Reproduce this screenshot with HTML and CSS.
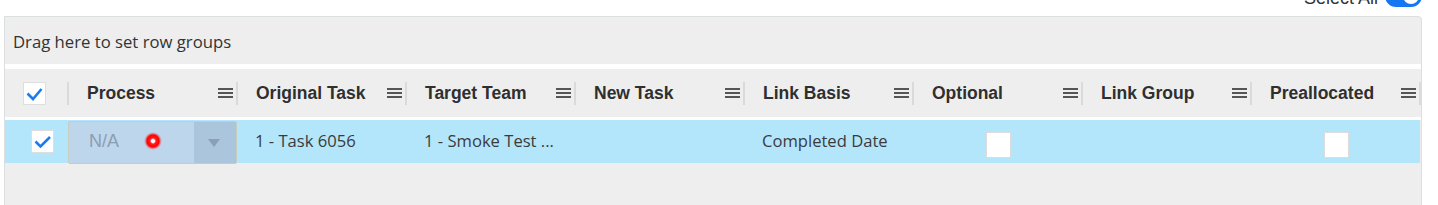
FILE: index.html
```html
<!DOCTYPE html>
<html>
<head>
<meta charset="utf-8">
<link rel="stylesheet" href="styles.css">
</head>
<body>
<div class="topbar">
  <span class="sel-label">Select All</span>
  <span class="toggle"><span class="knob"></span></span>
</div>
<div class="grid">
  <div class="group-panel">Drag here to set row groups</div>
  <div class="header">
    <div class="hcell hcell-check">
      <span class="cb"><svg viewBox="0 0 23 23" width="23" height="23"><path d="M4.5 11.5 L10 17 L18.5 7" fill="none" stroke="#1a7cf0" stroke-width="2.6"/></svg></span>
      <span class="sep"></span>
    </div>
    <div class="hcell"><span class="hlabel">Process</span><span class="menu"><i></i><i></i><i></i></span><span class="sep"></span></div>
    <div class="hcell"><span class="hlabel">Original Task</span><span class="menu"><i></i><i></i><i></i></span><span class="sep"></span></div>
    <div class="hcell"><span class="hlabel">Target Team</span><span class="menu"><i></i><i></i><i></i></span><span class="sep"></span></div>
    <div class="hcell"><span class="hlabel">New Task</span><span class="menu"><i></i><i></i><i></i></span><span class="sep"></span></div>
    <div class="hcell"><span class="hlabel">Link Basis</span><span class="menu"><i></i><i></i><i></i></span><span class="sep"></span></div>
    <div class="hcell"><span class="hlabel">Optional</span><span class="menu"><i></i><i></i><i></i></span><span class="sep"></span></div>
    <div class="hcell"><span class="hlabel">Link Group</span><span class="menu"><i></i><i></i><i></i></span><span class="sep"></span></div>
    <div class="hcell"><span class="hlabel">Preallocated</span><span class="menu"><i></i><i></i><i></i></span><span class="sep"></span></div>
  </div>
  <div class="row">
    <div class="cell cell-check">
      <span class="cb"><svg viewBox="0 0 23 23" width="23" height="23"><path d="M4.5 11.5 L9.5 16.5 L19 7" fill="none" stroke="#1a7cf0" stroke-width="2.6"/></svg></span>
    </div>
    <div class="cell cell-select">
      <div class="select">
        <span class="sel-text">N/A</span>
        <span class="sel-arrow"><span class="tri"></span></span>
        <span class="dot"></span>
      </div>
    </div>
    <div class="cell">1 - Task 6056</div>
    <div class="cell">1 - Smoke Test ...</div>
    <div class="cell"></div>
    <div class="cell">Completed Date</div>
    <div class="cell cell-center"><span class="box"></span></div>
    <div class="cell"></div>
    <div class="cell cell-center"><span class="box"></span></div>
  </div>
</div>
</body>
</html>
```

FILE: styles.css
```css
* { box-sizing: border-box; }
html, body { margin: 0; padding: 0; background: #fff; }
body { font-family: "Open Sans", "Noto Sans", sans-serif; color: #333; }

.topbar {
  height: 16px;
  display: flex;
  justify-content: flex-end;
  align-items: flex-end;
  padding: 0 16px 9px 0;
  gap: 7px;
}
.sel-label {
  font-family: "Liberation Sans", Arial, sans-serif;
  font-size: 18px;
  line-height: 18px;
  color: #333;
  white-space: nowrap;
}
.toggle {
  flex: none;
  width: 37px;
  height: 22px;
  border-radius: 11px;
  background: #1677f2;
  position: relative;
}
.knob {
  position: absolute;
  right: 3px;
  top: 3px;
  width: 16px;
  height: 16px;
  border-radius: 50%;
  background: #fff;
}

.grid {
  margin-left: 4px;
  width: 1418px;
  height: 195px;
  border: 1px solid #dcdfdf;
  border-top-right-radius: 4px;
  background: #eeeeee;
  overflow: hidden;
}

.group-panel {
  height: 52px;
  border-bottom: 5px solid #fff;
  padding-left: 8px;
  padding-top: 1px;
  display: flex;
  align-items: center;
  font-size: 16.7px;
  color: #333;
}

.header {
  height: 51px;
  border-bottom: 3px solid #fff;
  display: flex;
  align-items: center;
}
.hcell {
  flex: none;
  width: 169px;
  height: 100%;
  display: flex;
  align-items: center;
  padding-left: 18px;
}
.hcell-check { width: 64px; }
.hlabel {
  flex: 1;
  font-family: "Liberation Sans", Arial, sans-serif;
  font-weight: bold;
  font-size: 17.5px;
  color: #2f2f2f;
  white-space: nowrap;
}
.menu {
  flex: none;
  width: 15px;
  display: flex;
  flex-direction: column;
  gap: 2.3px;
  margin-right: 3px;
}
.menu i {
  display: block;
  height: 2px;
  background: #555;
}
.sep {
  flex: none;
  width: 2px;
  height: 23px;
  background: #dadada;
  margin-left: auto;
}

.cb {
  flex: none;
  width: 23px;
  height: 23px;
  background: #fff;
  border: 1px solid #dedede;
  display: block;
}
.cb svg { display: block; margin: -1px; }

.row {
  height: 43px;
  display: flex;
  background: #b3e6fb;
  width: 1415px;
}
.cell {
  flex: none;
  width: 169px;
  height: 100%;
  display: flex;
  align-items: center;
  padding-left: 18px;
  padding-bottom: 3px;
  font-size: 16.6px;
  color: #3b3b3b;
  white-space: nowrap;
}
.cell-check { width: 63px; padding-left: 26px; padding-bottom: 0; }
.cell-select { padding-left: 0; padding-bottom: 0; align-items: flex-start; }
.cell-center { padding-left: 0; padding-bottom: 0; justify-content: center; }
.box {
  width: 25px;
  height: 26px;
  margin-top: 6px;
  background: #fff;
  border: 1px solid #dcdcdc;
  margin-left: 2px;
}

.select {
  position: relative;
  margin-top: 1px;
  width: 169px;
  height: 43px;
  border: 1px solid #c8cdbd;
  border-radius: 2px;
  background: #bdd6eb;
  display: flex;
  align-items: center;
}
.sel-text {
  padding-left: 20px;
  padding-bottom: 2px;
  font-family: "Liberation Sans", Arial, sans-serif;
  font-size: 18px;
  color: #8c9eb2;
}
.sel-arrow {
  margin-left: auto;
  width: 42px;
  height: 100%;
  background: #abc5dc;
  display: flex;
  align-items: center;
  justify-content: center;
}
.tri {
  width: 0;
  height: 0;
  border-left: 6px solid transparent;
  border-right: 6px solid transparent;
  border-top: 8px solid #8aa0b6;
  margin-left: -2px;
}
.dot {
  position: absolute;
  left: 75px;
  top: 10px;
  width: 18px;
  height: 18px;
  border-radius: 50%;
  background: radial-gradient(circle, #fff 0, #fff 1.5px, #ff2020 3px, #ff0000 6px, rgba(255,0,0,0.35) 7.5px, rgba(255,0,0,0) 9px);
}
```
